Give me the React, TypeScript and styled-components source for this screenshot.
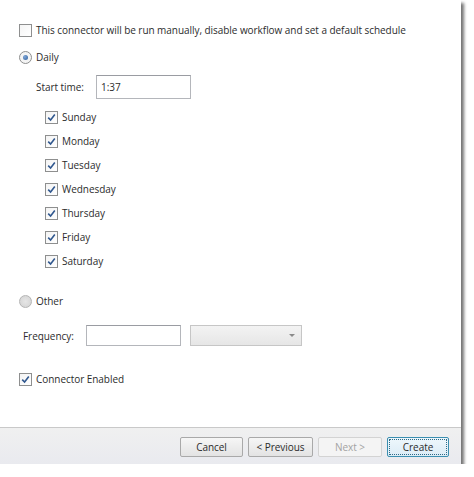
import styled, { createGlobalStyle } from "styled-components";

const GlobalStyle = createGlobalStyle`
  html, body {
    margin: 0;
    padding: 0;
    background: #ffffff;
  }
  body {
    font-family: "Open Sans", "Noto Sans", sans-serif;
    font-size: 10px;
    letter-spacing: -0.05px;
    color: #2c2c2c;
  }
`;

const Window = styled.div`
  width: 461px;
  height: 464px;
  background: #ffffff;
  display: flex;
  flex-direction: column;
  box-shadow: 3px 3px 3px rgba(0, 0, 0, 0.55);
`;

const Content = styled.div`
  flex: 1;
  display: flex;
  flex-direction: column;
  padding: 23px 0 0 19px;
`;

const Row = styled.div<{ $top: number; $indent?: number; $height?: number }>`
  display: flex;
  align-items: center;
  gap: 4px;
  height: ${(p) => p.$height ?? 14}px;
  margin-top: ${(p) => p.$top}px;
  padding-left: ${(p) => p.$indent ?? 0}px;
`;

const Box = styled.span`
  width: 11px;
  height: 11px;
  border: 1px solid #8e8f8f;
  background: linear-gradient(135deg, #f4f4f4, #ffffff);
  display: inline-flex;
  align-items: center;
  justify-content: center;
  flex-shrink: 0;
`;

const Round = styled.span<{ $on?: boolean }>`
  width: 11px;
  height: 11px;
  border-radius: 50%;
  border: 1px solid ${(p) => (p.$on ? "#8e8f8f" : "#b5b5b5")};
  background: ${(p) => (p.$on ? "#f4f4f4" : "radial-gradient(circle, #e6e6e6, #d2d2d2)")};
  display: inline-flex;
  align-items: center;
  justify-content: center;
  flex-shrink: 0;
`;

const Dot = styled.span`
  width: 5px;
  height: 5px;
  border-radius: 50%;
  background: radial-gradient(circle at 35% 35%, #7fa6d6, #2e5f9e);
`;

const Label = styled.span<{ $width?: number }>`
  width: ${(p) => (p.$width ? `${p.$width}px` : "auto")};
  white-space: nowrap;
`;

const TextInput = styled.div<{ $width: number; $height: number }>`
  width: ${(p) => p.$width}px;
  height: ${(p) => p.$height}px;
  box-sizing: border-box;
  border: 1px solid #b4b6bb;
  border-top-color: #9a9ca2;
  background: #ffffff;
  display: flex;
  align-items: center;
  padding-left: 4px;
`;

const Select = styled.div`
  width: 112px;
  height: 21px;
  margin-left: 5px;
  box-sizing: border-box;
  border: 1px solid #c6c6c6;
  background: linear-gradient(#f3f3f3, #e6e6e6);
  display: flex;
  align-items: center;
  justify-content: flex-end;
  padding-right: 6px;
`;

const Caret = styled.span`
  width: 0;
  height: 0;
  border-left: 3px solid transparent;
  border-right: 3px solid transparent;
  border-top: 3px solid #8a8a8a;
`;

const Footer = styled.div`
  box-sizing: border-box;
  height: 37px;
  border-top: 1px solid #c9c9c9;
  background: linear-gradient(#f0f0f0, #e9eaef);
  display: flex;
  justify-content: flex-end;
  align-items: flex-start;
  gap: 5px;
  padding: 9px 12px 0 0;
`;

const Button = styled.div<{ $width: number; $kind?: "disabled" | "default" }>`
  width: ${(p) => p.$width}px;
  height: 20px;
  box-sizing: border-box;
  border: 1px solid
    ${(p) => (p.$kind === "disabled" ? "#d3d3d3" : p.$kind === "default" ? "#3b8fb0" : "#a9a9a9")};
  border-radius: 2px;
  background: ${(p) =>
    p.$kind === "disabled"
      ? "#f4f4f4"
      : p.$kind === "default"
      ? "linear-gradient(#eef7fc, #dcecf6)"
      : "linear-gradient(#f6f6f6, #e3e3e3)"};
  color: ${(p) => (p.$kind === "disabled" ? "#a3a3a3" : "#2a2a2a")};
  display: flex;
  align-items: center;
  justify-content: center;
  position: relative;
  ${(p) =>
    p.$kind === "default" &&
    `&::after {
      content: "";
      position: absolute;
      inset: 1px;
      border: 1px dotted #2e6a86;
    }`}
`;

const Check = () => (
  <Box>
    <svg width="9" height="9" viewBox="0 0 9 9">
      <path d="M1.2 4.6 L3.6 7 L7.8 1.6" fill="none" stroke="#31588f" strokeWidth="1.6" />
    </svg>
  </Box>
);

const days = ["Sunday", "Monday", "Tuesday", "Wednesday", "Thursday", "Friday", "Saturday"];

export default function App() {
  return (
    <>
      <GlobalStyle />
      <Window>
        <Content>
          <Row $top={0}>
            <Box />
            <Label>This connector will be run manually, disable workflow and set a default schedule</Label>
          </Row>
          <Row $top={13}>
            <Round $on>
              <Dot />
            </Round>
            <Label>Daily</Label>
          </Row>
          <Row $top={11} $indent={17} $height={24}>
            <Label $width={56}>Start time:</Label>
            <TextInput $width={95} $height={24}>1:37</TextInput>
          </Row>
          <Row $top={6} $indent={26} $height={24}>
            <Check />
            <Label>{days[0]}</Label>
          </Row>
          {days.slice(1).map((d) => (
            <Row key={d} $top={0} $indent={26} $height={24}>
              <Check />
              <Label>{d}</Label>
            </Row>
          ))}
          <Row $top={21}>
            <Round />
            <Label>Other</Label>
          </Row>
          <Row $top={17} $indent={4} $height={21}>
            <Label $width={59}>Frequency:</Label>
            <TextInput $width={95} $height={21} />
            <Select>
              <Caret />
            </Select>
          </Row>
          <Row $top={26}>
            <Check />
            <Label>Connector Enabled</Label>
          </Row>
        </Content>
        <Footer>
          <Button $width={63}>Cancel</Button>
          <Button $width={65}>&lt; Previous</Button>
          <Button $width={64} $kind="disabled">
            Next &gt;
          </Button>
          <Button $width={62} $kind="default">
            Create
          </Button>
        </Footer>
      </Window>
    </>
  );
}
